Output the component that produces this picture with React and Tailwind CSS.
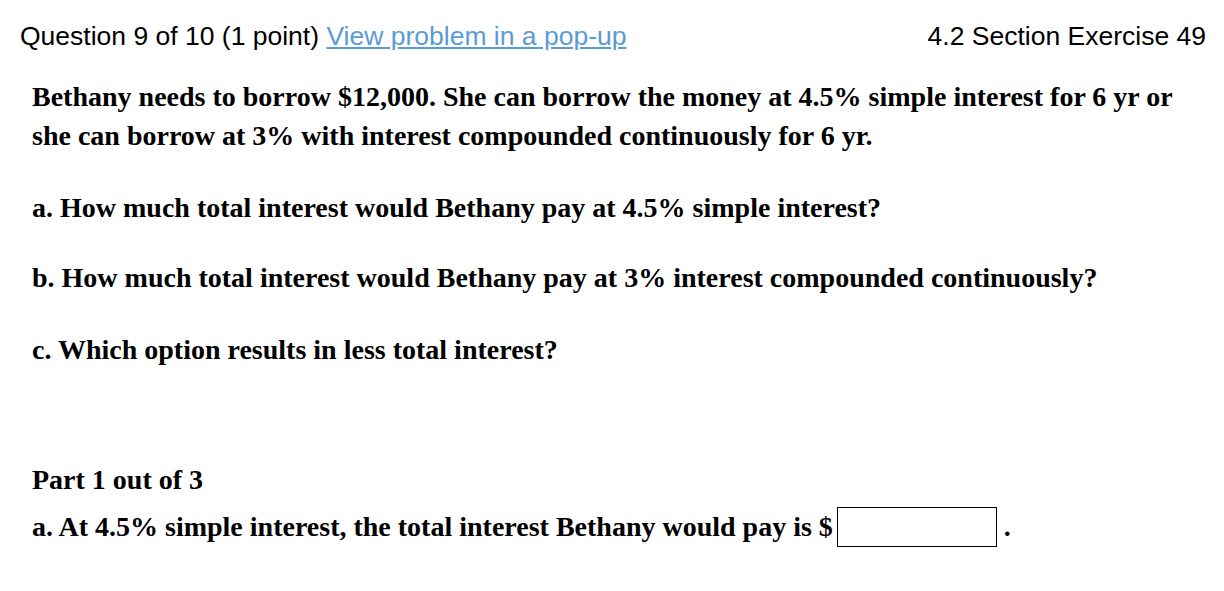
import React from 'react';

const App = () => {
  return (
    <div className="w-[1224px] h-[591px] bg-white overflow-hidden">
      <div className="flex items-center justify-between pl-5 pr-[18px] pt-[21px] leading-[30px] font-['Liberation_Sans',Arial,sans-serif] text-[26.5px] text-black">
        <div>
          Question 9 of 10 (1 point){' '}
          <a href="#" className="text-[#5b9bd5] underline underline-offset-2">View problem in a pop-up</a>
        </div>
        <div>4.2 Section Exercise 49</div>
      </div>

      <div className="pl-8 pr-4 pt-[26px] font-['Liberation_Serif','Times_New_Roman',serif] font-bold text-[28px] text-black">
        <p className="leading-[39px]">
          Bethany needs to borrow $12,000. She can borrow the money at 4.5% simple interest for 6 yr or she can borrow at 3% with interest compounded continuously for 6 yr.
        </p>
        <p className="mt-[33px] leading-[39px]">a. How much total interest would Bethany pay at 4.5% simple interest?</p>
        <p className="mt-[31px] leading-[39px]">b. How much total interest would Bethany pay at 3% interest compounded continuously?</p>
        <p className="mt-[33px] leading-[39px]">c. Which option results in less total interest?</p>

        <p className="mt-[91px] leading-[39px]">Part 1 out of 3</p>
        <div className="mt-[7px] flex items-center">
          <span>a. At 4.5% simple interest, the total interest Bethany would pay is&nbsp;$</span>
          <input type="text" className="ml-[4px] w-[160px] h-[40px] border border-black outline-none" />
          <span className="ml-[7px]">.</span>
        </div>
      </div>
    </div>
  );
};

export default App;
